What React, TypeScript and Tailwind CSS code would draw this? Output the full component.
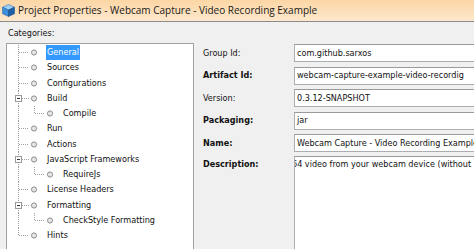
import React from "react";

type Node = { label: string; level: 0 | 1; expandable?: boolean; last?: boolean; selected?: boolean };

const nodes: Node[] = [
  { label: "General", level: 0, selected: true },
  { label: "Sources", level: 0 },
  { label: "Configurations", level: 0 },
  { label: "Build", level: 0, expandable: true },
  { label: "Compile", level: 1 },
  { label: "Run", level: 0 },
  { label: "Actions", level: 0 },
  { label: "JavaScript Frameworks", level: 0, expandable: true },
  { label: "RequireJs", level: 1 },
  { label: "License Headers", level: 0 },
  { label: "Formatting", level: 0, expandable: true },
  { label: "CheckStyle Formatting", level: 1 },
  { label: "Hints", level: 0, last: true },
];

function Bullet({ cx }: { cx: number }) {
  return <circle cx={cx} cy={7.5} r={2.6} fill="#e4e4e4" stroke="#8e8e8e" strokeWidth={1} />;
}

function Connector({ node }: { node: Node }) {
  const w = node.level === 0 ? 39 : 55;
  return (
    <svg width={w} height={15} className="shrink-0" viewBox={`0 0 ${w} 15`}>
      <g stroke="#a0a0a0" strokeWidth={1} strokeDasharray="1 1" fill="none">
        <line x1={11.5} y1={0} x2={11.5} y2={node.last ? 7.5 : 15} />
        {node.level === 0 ? (
          <line x1={node.expandable ? 15 : 12} y1={7.5} x2={22} y2={7.5} />
        ) : (
          <>
            <line x1={27.5} y1={0} x2={27.5} y2={7.5} />
            <line x1={28} y1={7.5} x2={37} y2={7.5} />
          </>
        )}
      </g>
      {node.expandable && (
        <g>
          <rect x={8.5} y={4.5} width={6} height={6} fill="#fff" stroke="#9a9a9a" />
          <line x1={10} y1={7.5} x2={13} y2={7.5} stroke="#333" />
        </g>
      )}
      <Bullet cx={node.level === 0 ? 27 : 43} />
    </svg>
  );
}

function Field({ value, bold, label }: { value: string; bold?: boolean; label: string }) {
  return (
    <div className="flex h-[22.5px] items-center">
      <div className={`w-[91px] shrink-0 ${bold ? "font-bold" : ""}`}>{label}</div>
      <div className="flex h-[18px] flex-1 items-center overflow-hidden whitespace-nowrap border border-[#abadb3] border-t-[#9a9a9a] bg-white pl-[2px]">
        {value}
      </div>
    </div>
  );
}

export default function App() {
  return (
    <div
      className="h-[249px] w-[474px] overflow-hidden bg-[#f0f0f0] text-[9px] text-[#111]"
      style={{ fontFamily: "'DejaVu Sans Condensed', 'DejaVu Sans', sans-serif", fontStretch: "condensed" }}
    >
      <div className="flex h-[22px] items-center gap-[3px] border-b border-[#8c8c8c] bg-gradient-to-b from-[#fcd6a4] to-[#fde8cd] pl-[2px]">
        <svg width={13} height={13} viewBox="0 0 13 13">
          <path d="M6.5 0.5 L12.5 3.2 L6.5 6 L0.5 3.2 Z" fill="#9fd0f5" stroke="#2d6fb3" strokeWidth={0.6} />
          <path d="M0.5 3.2 L6.5 6 L6.5 12.5 L0.5 9.7 Z" fill="#3c8fd8" stroke="#2d6fb3" strokeWidth={0.6} />
          <path d="M12.5 3.2 L6.5 6 L6.5 12.5 L12.5 9.7 Z" fill="#1f5fa8" stroke="#1d4f8f" strokeWidth={0.6} />
        </svg>
        <span
          className="text-[10px] text-[#1a1a1a]"
          style={{ fontFamily: "'Open Sans', 'Noto Sans', sans-serif", fontStretch: "normal" }}
        >
          Project Properties - Webcam Capture - Video Recording Example
        </span>
      </div>
      <div className="flex">
        <div className="w-[194px] shrink-0 pl-[6px]">
          <div className="h-[21px] pl-[2px] pt-[5px] leading-[12px]">Categories:</div>
          <div className="h-[210px] border border-[#a0a0a0] bg-white pt-[1px]">
            {nodes.map((n) => (
              <div key={n.label} className="flex h-[15.25px] items-center">
                <Connector node={n} />
                <span
                  className={`whitespace-nowrap px-[1px] leading-[15px] ${
                    n.selected ? "bg-[#3399ff] text-white" : ""
                  }`}
                >
                  {n.label}
                </span>
              </div>
            ))}
          </div>
        </div>
        <div className="flex-1 pl-[9px] pt-[20px]">
          <Field label="Group Id:" value="com.github.sarxos" />
          <Field label="Artifact Id:" value="webcam-capture-example-video-recordig" bold />
          <Field label="Version:" value="0.3.12-SNAPSHOT" />
          <Field label="Packaging:" value="jar" bold />
          <Field label="Name:" value="Webcam Capture - Video Recording Example" bold />
          <div className="flex pt-[1px]">
            <div className="w-[91px] shrink-0 pt-[2px] font-bold">Description:</div>
            <div className="h-[120px] flex-1 overflow-hidden whitespace-nowrap border border-[#abadb3] border-t-[#9a9a9a] bg-white pt-[1px]">
              <span className="-ml-[3px] inline-block">64 video from your webcam device (without</span>
            </div>
          </div>
        </div>
      </div>
    </div>
  );
}
